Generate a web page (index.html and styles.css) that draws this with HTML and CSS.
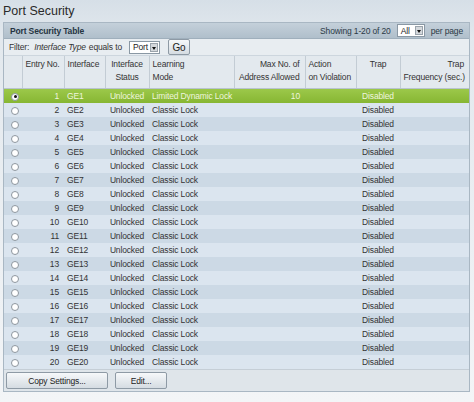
FILE: index.html
```html
<!DOCTYPE html>
<html lang="en">
<head>
    <meta charset="UTF-8">
    <title>Port Security</title>
    <link rel="stylesheet" href="styles.css">
</head>
<body>
    <h1>Port Security</h1>

    <div class="panel">
        <div class="panel-head">
            <span class="panel-title">Port Security Table</span>
            <span class="paging">
                Showing 1-20 of 20
                <span class="select select-all">All<span class="arrow"></span></span>
                per page
            </span>
        </div>

        <div class="filter">
            Filter: <i>Interface Type</i> equals to
            <span class="select select-port">Port<span class="arrow"></span></span>
            <span class="btn btn-go">Go</span>
        </div>

        <table>
            <colgroup>
                <col style="width:18px">
                <col style="width:42px">
                <col style="width:41px">
                <col style="width:44px">
                <col style="width:85px">
                <col style="width:71px">
                <col style="width:51px">
                <col style="width:44px">
                <col>
            </colgroup>
            <thead>
                <tr>
                    <th></th>
                    <th class="right">Entry No.</th>
                    <th>Interface</th>
                    <th class="center">Interface<br>Status</th>
                    <th>Learning<br>Mode</th>
                    <th class="right">Max No. of<br>Address Allowed</th>
                    <th>Action<br>on Violation</th>
                    <th class="center">Trap</th>
                    <th class="right">Trap<br>Frequency (sec.)</th>
                </tr>
            </thead>
            <tbody id="rows"></tbody>
        </table>

        <div class="footer">
            <span class="btn btn-copy">Copy Settings...</span>
            <span class="btn btn-edit">Edit...</span>
        </div>
    </div>

    <script>
        const rows = document.getElementById("rows");
        for (let i = 1; i <= 20; i++) {
            const tr = document.createElement("tr");
            if (i === 1) tr.className = "selected";
            tr.innerHTML = `
                <td><span class="radio"></span></td>
                <td class="right">${i}</td>
                <td>GE${i}</td>
                <td class="center">Unlocked</td>
                <td>${i === 1 ? 'Limited Dynamic Lock' : 'Classic Lock'}</td>
                <td class="right">${i === 1 ? '10' : ''}</td>
                <td></td>
                <td class="center">Disabled</td>
                <td></td>
            `;
            rows.appendChild(tr);
        }
    </script>
</body>
</html>
```

FILE: styles.css
```css
body {
    margin: 0;
    font-family: "Liberation Sans", Arial, sans-serif;
    font-size: 8.5px;
    letter-spacing: -0.15px;
    color: #333;
    background: linear-gradient(#d6dfe7 0, #e3e9ee 40px, #f3f5f7 100%);
    height: 402px;
}

h1 {
    margin: 0;
    padding: 4px 3px 0;
    height: 18px;
    font-size: 12.5px;
    line-height: 15px;
    font-weight: normal;
    letter-spacing: 0;
    color: #2a2a2a;
}

.panel {
    margin: 0 4px 0 3px;
    border: 1px solid #a9b7c3;
    background: #e6ebf0;
}

.panel-head {
    height: 15px;
    display: flex;
    align-items: center;
    justify-content: space-between;
    padding: 0 6px 0 6px;
    background: linear-gradient(#c4d0da, #b0bfcb);
    border-bottom: 1px solid #9fafbc;
}

.panel-title {
    font-weight: bold;
    color: #263542;
}

.paging {
    display: flex;
    align-items: center;
    gap: 6px;
    color: #2c3a46;
}

.filter {
    height: 16px;
    display: flex;
    align-items: center;
    gap: 3px;
    padding: 0 5px;
    background: #e8edf1;
    border-bottom: 1px solid #cdd6de;
}

.filter i {
    margin-left: 2px;
}

.select {
    display: inline-flex;
    align-items: center;
    justify-content: space-between;
    height: 11px;
    padding: 0 1px 0 3px;
    background: #fff;
    border: 1px solid #8a98a4;
    color: #222;
}

.select-port {
    width: 25px;
    margin-left: 4px;
}

.select-all {
    width: 22px;
}

.arrow {
    width: 8px;
    height: 9px;
    background: #d4d8dc;
    border: 1px solid #9aa3ab;
    box-sizing: border-box;
    position: relative;
}

.arrow::after {
    content: "";
    position: absolute;
    left: 1px;
    top: 3px;
    border-left: 2.5px solid transparent;
    border-right: 2.5px solid transparent;
    border-top: 3px solid #111;
}

.btn {
    display: inline-flex;
    align-items: center;
    justify-content: center;
    height: 15px;
    border: 1px solid #8e9aa5;
    border-radius: 2px;
    background: linear-gradient(#f6f8fa, #d5dce2);
    color: #222;
}

.btn-go {
    width: 20px;
    height: 14px;
    margin-left: 5px;
    font-size: 10px;
}

table {
    width: 100%;
    border-collapse: collapse;
    table-layout: fixed;
}

th {
    height: 30px;
    padding: 2px 3px 0;
    font-weight: normal;
    text-align: left;
    vertical-align: top;
    line-height: 13px;
    color: #333;
    background: #e3e9ee;
    border-left: 1px solid #c3ccd4;
    border-bottom: 1px solid #b9c4ce;
    white-space: nowrap;
}

th:first-child {
    border-left: none;
}

td {
    height: 14px;
    padding: 0 3px;
    line-height: 14px;
    white-space: nowrap;
    overflow: hidden;
    color: #333;
}

tbody tr:nth-child(even) {
    background: #dbe5ef;
}

tbody tr:nth-child(odd) {
    background: #ccd9e5;
}

tbody tr.selected {
    background: linear-gradient(#9cc84a, #85b531);
}

tbody tr.selected td {
    color: #eef5de;
}

.right {
    text-align: right;
    padding-right: 5px;
}

.center {
    text-align: center;
}

.radio {
    display: inline-block;
    width: 6px;
    height: 6px;
    margin-left: 4px;
    border: 1px solid #8d969e;
    border-radius: 50%;
    background: #fff;
    vertical-align: middle;
    position: relative;
}

.selected .radio::after {
    content: "";
    position: absolute;
    left: 1.5px;
    top: 1.5px;
    width: 3px;
    height: 3px;
    border-radius: 50%;
    background: #111;
}

.footer {
    height: 21px;
    display: flex;
    align-items: center;
    gap: 7px;
    padding: 0 2px;
    background: #dfe5ea;
    border-top: 1px solid #c5ced6;
}

.btn-copy {
    width: 100px;
}

.btn-edit {
    width: 50px;
}
```
